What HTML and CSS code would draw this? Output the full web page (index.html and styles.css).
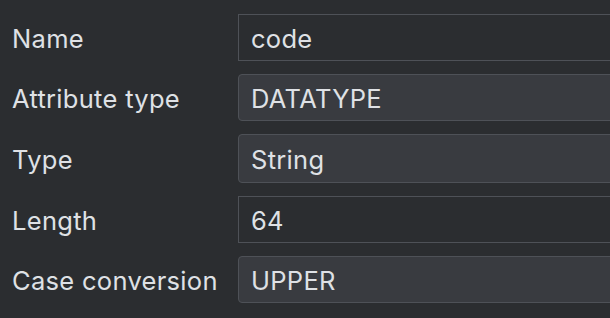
FILE: index.html
```html
<!DOCTYPE html>
<html lang="en">
<head>
    <meta charset="UTF-8">
    <title>Attribute properties</title>
    <link rel="stylesheet" href="styles.css">
</head>
<body>
    <div class="form">
        <label class="label">Name</label>
        <div class="field text-field">code</div>

        <label class="label">Attribute type</label>
        <div class="field combo">DATATYPE</div>

        <label class="label">Type</label>
        <div class="field combo tall">String</div>

        <label class="label">Length</label>
        <div class="field text-field">64</div>

        <label class="label">Case conversion</label>
        <div class="field combo">UPPER</div>
    </div>
</body>
</html>
```

FILE: styles.css
```css
html, body {
    margin: 0;
    background-color: #2b2d30;
    overflow: hidden;
}
body {
    font-family: 'Inter', 'Noto Sans', sans-serif;
    font-size: 25.5px;
    letter-spacing: 0.3px;
    color: #dfe1e5;
    padding: 14px 0 0 12px;
    width: 700px;
}
.form {
    display: grid;
    grid-template-columns: 226px 1fr;
    row-gap: 13px;
    align-items: center;
}
.label {
    padding-top: 2px;
}
.field {
    height: 47px;
    box-sizing: border-box;
    border: 1px solid #4e5157;
    padding: 2px 12px 0;
    display: flex;
    align-items: center;
}
.text-field {
    background-color: #2b2d30;
}
.combo {
    background-color: #393b40;
    border-radius: 4px;
}
.tall {
    height: 49px;
}
```
